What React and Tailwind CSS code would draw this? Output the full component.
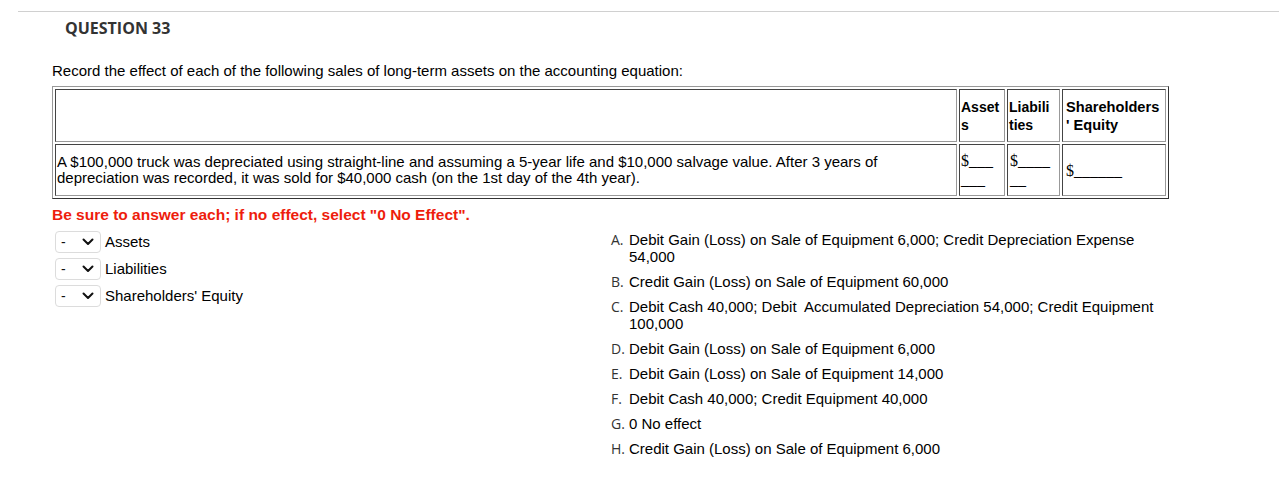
import React from "react";

const ARIAL = "font-['Liberation_Sans',Arial,sans-serif]";
const SERIF = "font-['Liberation_Serif','Times_New_Roman',serif]";

const options = [
  { key: "A.", text: "Debit Gain (Loss) on Sale of Equipment 6,000; Credit Depreciation Expense 54,000" },
  { key: "B.", text: "Credit Gain (Loss) on Sale of Equipment 60,000" },
  { key: "C.", text: "Debit Cash 40,000; Debit\u00a0 Accumulated Depreciation 54,000; Credit Equipment 100,000" },
  { key: "D.", text: "Debit Gain (Loss) on Sale of Equipment 6,000" },
  { key: "E.", text: "Debit Gain (Loss) on Sale of Equipment 14,000" },
  { key: "F.", text: "Debit Cash 40,000; Credit Equipment 40,000" },
  { key: "G.", text: "0 No effect" },
  { key: "H.", text: "Credit Gain (Loss) on Sale of Equipment 6,000" },
];

const prompts = ["Assets", "Liabilities", "Shareholders' Equity"];

const Chevron = () => (
  <svg width="12" height="8" viewBox="0 0 12 8" fill="none">
    <path d="M1.5 1.5 L6 6 L10.5 1.5" stroke="#111" strokeWidth="2" strokeLinecap="round" strokeLinejoin="round" />
  </svg>
);

// fake dropdown, the native one draws differently in headless chrome
const DashSelect = () => (
  <div className="w-[46px] h-[22px] shrink-0 rounded-[4px] border border-[#dcdcdc] bg-white flex items-center justify-between pl-[5px] pr-[6px]">
    <span className="text-[14px] leading-none text-[#111]">-</span>
    <Chevron />
  </div>
);

const cellBorder = "border border-t-[#444] border-l-[#444] border-b-[#999] border-r-[#999] p-px";

export default function App() {
  return (
    <div className={`min-h-[498px] bg-white text-black ${ARIAL}`}>
      {/* top rule */}
      <div className="pt-[11px] pl-[18px]">
        <div className="h-px bg-[#d0d0d0]" />
      </div>

      <h2 className="mt-[5px] pl-[65px] font-['Open_Sans',sans-serif] font-bold text-[16px] leading-[22px] text-[#333]">
        QUESTION 33
      </h2>

      <div className="pl-[52px]">
        <p className="mt-[24px] text-[15px] leading-[16px]">
          Record the effect of each of the following sales of long-term assets on the accounting equation:
        </p>

        {/* equation table */}
        <table className="mt-[7px] w-[1117px] table-fixed border-separate border-spacing-[2px] border border-t-[#999] border-l-[#999] border-b-[#333] border-r-[#333] text-[15px]">
          <tbody>
            <tr>
              <td className={`${cellBorder} h-[53px]`}></td>
              <td className={`${cellBorder} w-[46px] text-[14px] font-bold leading-[18px] align-middle`}>
                Asset<br />s
              </td>
              <td className={`${cellBorder} w-[53px] text-[14px] font-bold leading-[18px] align-middle`}>
                Liabili<br />ties
              </td>
              <td className={`${cellBorder} w-[104px] text-[14.6px] font-bold leading-[18px] align-middle pl-[3px]`}>
                Shareholders<br />' Equity
              </td>
            </tr>
            <tr>
              <td className={`${cellBorder} h-[52px] leading-[16px] align-middle`}>
                A $100,000 truck was depreciated using straight-line and assuming a 5-year life and $10,000 salvage value. After 3 years of depreciation was recorded, it was sold for $40,000 cash (on the 1st day of the 4th year).
              </td>
              <td className={`${cellBorder} ${SERIF} text-[16px] leading-[19px] align-middle`}>
                $___<br />___
              </td>
              <td className={`${cellBorder} ${SERIF} text-[16px] leading-[19px] align-middle pl-[2px]`}>
                $____<br />__
              </td>
              <td className={`${cellBorder} ${SERIF} text-[16px] leading-[19px] align-middle pl-[3px]`}>
                $______
              </td>
            </tr>
          </tbody>
        </table>

        <p className="mt-[8px] text-[15.5px] leading-[16px] font-bold text-[#ee1d0c]">
          Be sure to answer each; if no effect, select "0 No Effect".
        </p>
      </div>

      {/* matching section */}
      <div className="mt-[8px] pl-[55px] flex items-start">
        <div className="w-[556px] shrink-0 flex flex-col gap-[5px]">
          {prompts.map((p) => (
            <div key={p} className="flex items-center gap-[4px]">
              <DashSelect />
              <span className="text-[15px] leading-[16px]">{p}</span>
            </div>
          ))}
        </div>

        <div className="w-[556px] flex flex-col gap-[8px]">
          {options.map((o) => (
            <div key={o.key} className="flex">
              <span className="w-[18px] shrink-0 font-['Open_Sans',sans-serif] text-[14px] leading-[17px] text-[#333]">
                {o.key}
              </span>
              <span className="w-[537px] text-[15px] leading-[17px]">{o.text}</span>
            </div>
          ))}
        </div>
      </div>
    </div>
  );
}
